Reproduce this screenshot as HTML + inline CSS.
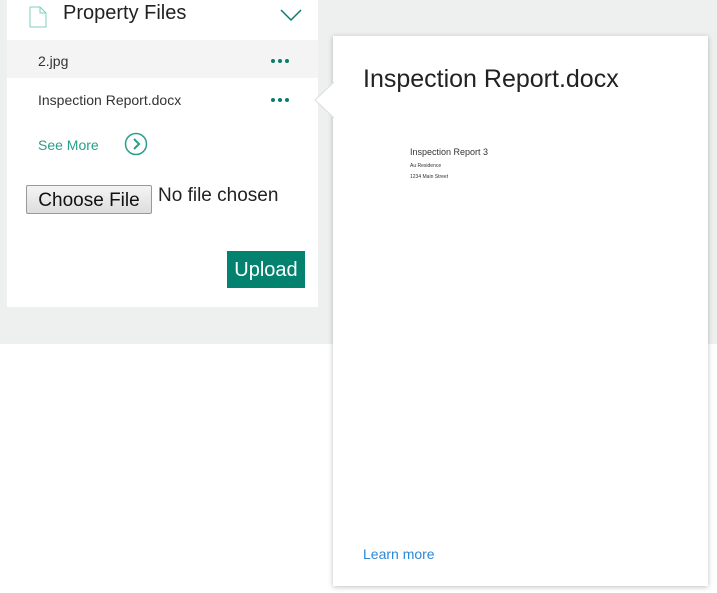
<!DOCTYPE html>
<html><head><style>
body{margin:0;width:717px;height:593px;background:#fff;position:relative;overflow:hidden;font-family:"Liberation Sans",sans-serif;}
.band{position:absolute;left:0;top:0;width:717px;height:344px;background:#eef0ef;}
.panel{position:absolute;left:7px;top:0;width:311px;height:307px;background:#fff;}
.t{position:absolute;white-space:nowrap;}
.row{position:absolute;left:7px;top:40px;width:311px;height:38px;background:#f4f4f4;}
.call{position:absolute;left:333px;top:36px;width:375px;height:550px;background:#fff;box-shadow:0 1px 5px rgba(0,0,0,.25);}
</style></head><body>
<div class="band"></div>
<div class="panel"></div>
<div class="row"></div>
<svg class="t" style="left:29px;top:6px" width="18" height="22" viewBox="0 0 18 22"><path d="M1 1H11L17 7V21H1Z M11 1V7H17" fill="none" stroke="#7fcfc0" stroke-width="1"/></svg>
<div class="t" style="left:63px;top:2px;font-size:20px;color:#222">Property Files</div>
<svg class="t" style="left:280px;top:8px" width="22" height="14"><path d="M1 2L11 12L21 2" fill="none" stroke="#0a7c6c" stroke-width="1.5"/></svg>
<div class="t" style="left:38px;top:53px;font-size:14px;color:#333">2.jpg</div>
<svg class="t" style="left:270px;top:58px" width="20" height="6"><circle cx="3" cy="3" r="2" fill="#0a7c6c"/><circle cx="10" cy="3" r="2" fill="#0a7c6c"/><circle cx="17" cy="3" r="2" fill="#0a7c6c"/></svg>
<div class="t" style="left:38px;top:92px;font-size:14px;color:#333">Inspection Report.docx</div>
<svg class="t" style="left:270px;top:97px" width="20" height="6"><circle cx="3" cy="3" r="2" fill="#0a7c6c"/><circle cx="10" cy="3" r="2" fill="#0a7c6c"/><circle cx="17" cy="3" r="2" fill="#0a7c6c"/></svg>
<div class="t" style="left:38px;top:137px;font-size:14px;color:#2a9d8a">See More</div>
<svg class="t" style="left:124px;top:132px" width="24" height="24"><circle cx="12" cy="12" r="10.5" fill="none" stroke="#2a9d8a" stroke-width="1.5"/><path d="M10 7L15 12L10 17" fill="none" stroke="#2a9d8a" stroke-width="2"/></svg>
<div class="t" style="left:26px;top:185px;width:126px;height:29px;border:1px solid #999;border-radius:2px;background:linear-gradient(#f4f4f4,#ddd);font-size:19px;color:#111;text-align:center;line-height:29px;box-sizing:border-box">Choose File</div>
<div class="t" style="left:158px;top:185px;font-size:19px;color:#222">No file chosen</div>
<div class="t" style="left:227px;top:251px;width:78px;height:37px;background:#038270;color:#fff;font-size:20px;line-height:39px;text-align:center">Upload</div>
<div class="call"></div>
<svg class="t" style="left:314px;top:82px" width="21" height="36"><path d="M20 0L1 18L20 36Z" fill="#fff"/><path d="M20 0L1 18L20 36" fill="none" stroke="#ddd" stroke-width="1"/></svg>
<div class="t" style="left:363px;top:65px;font-size:25px;color:#222">Inspection Report.docx</div>
<div class="t" style="left:410px;top:147px;font-size:9px;color:#333">Inspection Report 3</div>
<div class="t" style="left:410px;top:163px;font-size:5px;color:#333">Au Residence</div>
<div class="t" style="left:410px;top:174px;font-size:5px;color:#333">1234 Main Street</div>
<div class="t" style="left:363px;top:546px;font-size:14px;color:#2b88d8">Learn more</div>
</body></html>
